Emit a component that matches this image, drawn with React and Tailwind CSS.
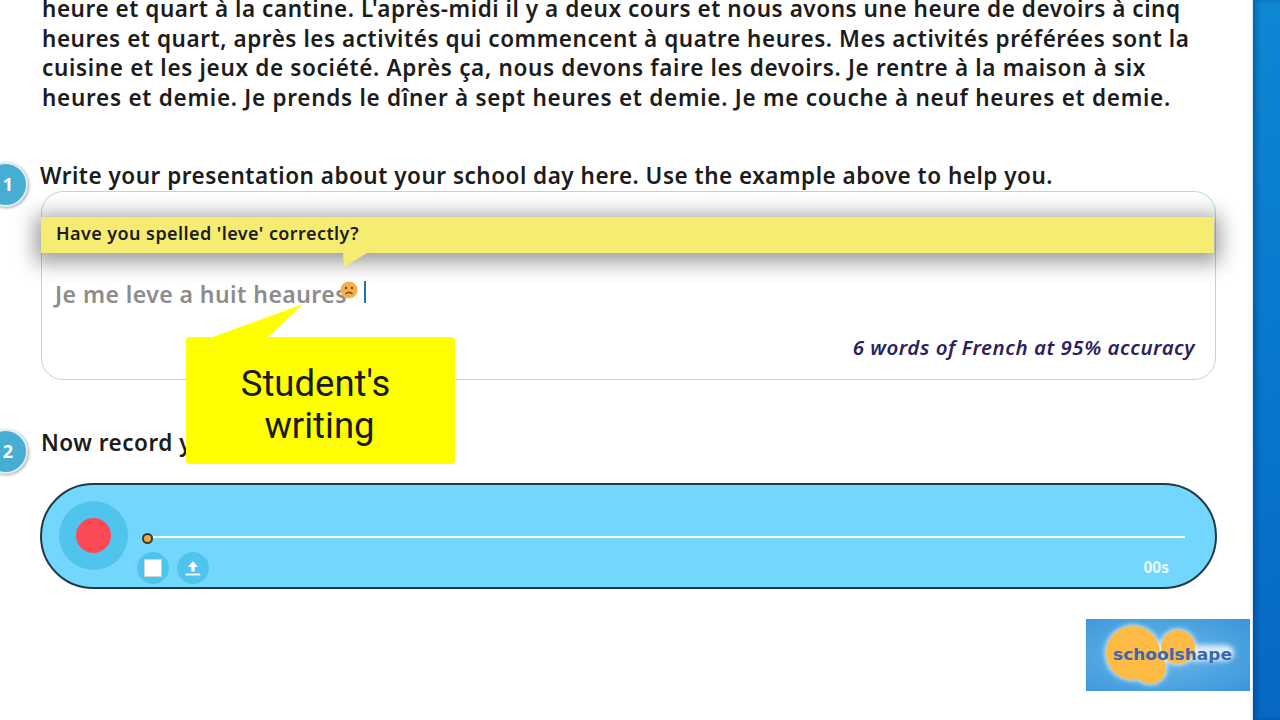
import React from "react";

const Step = ({ n }) => (
  <div className="w-[45px] h-[45px] shrink-0 -ml-[17px] rounded-full bg-[#48add3] border-2 border-[#dfeef4] shadow-[1px_1px_3px_rgba(0,0,0,0.35)] flex items-center justify-center text-white text-[18px] font-bold pl-[5px]">
    {n}
  </div>
);

const Logo = () => (
  <svg width="164" height="72" viewBox="0 0 164 72" className="block">
    <defs>
      <radialGradient id="logoBg" cx="0.45" cy="0.5" r="0.7">
        <stop offset="0" stopColor="#6bb8ea" />
        <stop offset="1" stopColor="#3c97d9" />
      </radialGradient>
      <filter id="logoGlow" x="-20%" y="-20%" width="140%" height="140%">
        <feGaussianBlur stdDeviation="2.5" />
      </filter>
    </defs>
    <rect width="164" height="72" fill="url(#logoBg)" />
    <g fill="#ffffff" opacity="0.8" filter="url(#logoGlow)">
      <circle cx="47" cy="34" r="28" />
      <circle cx="64" cy="49" r="17" />
      <circle cx="92" cy="28" r="18" />
      <rect x="60" y="26" width="88" height="16" rx="8" />
    </g>
    <g fill="#fdbb45">
      <circle cx="47" cy="34" r="27" />
      <circle cx="64" cy="49" r="16" />
      <circle cx="92" cy="28" r="17" />
    </g>
    <text x="27" y="41" fontFamily="'DejaVu Sans', sans-serif" fontSize="16" fontWeight="700" fill="#3b68ac" textLength="119" lengthAdjust="spacingAndGlyphs">
      schoolshape
    </text>
  </svg>
);

export default function App() {
  return (
    <div className="relative flex h-[720px] w-[1280px] overflow-hidden bg-white font-['Noto_Sans',sans-serif] text-[#1c1c1c]">
      <main className="w-[1252px] flex flex-col items-stretch">
        <div className="-mt-[6px] pl-[42px] pr-[50px] text-[22.5px] leading-[29.5px] font-semibold tracking-[0.55px] whitespace-nowrap">
          <p>heure et quart à la cantine. L'après-midi il y a deux cours et nous avons une heure de devoirs à cinq</p>
          <p>heures et quart, après les activités qui commencent à quatre heures. Mes activités préférées sont la</p>
          <p className="tracking-[0.67px]">cuisine et les jeux de société. Après ça, nous devons faire les devoirs. Je rentre à la maison à six</p>
          <p className="tracking-[0.73px]">heures et demie. Je prends le dîner à sept heures et demie. Je me couche à neuf heures et demie.</p>
        </div>

        <div className="flex items-start mt-[50px] h-[45px]">
          <Step n="1" />
          <h2 className="ml-[12px] -mt-[1px] text-[22.5px] leading-[30px] font-semibold tracking-[0.5px] whitespace-nowrap">
            Write your presentation about your school day here. Use the example above to help you.
          </h2>
        </div>

        {/* text box with the spelling hint */}
        <div className="relative ml-[41px] w-[1175px] h-[189px] -mt-[16px] rounded-[22px] border border-[#b5d8e8] flex flex-col">
          <div className="relative mt-[25px] -ml-px w-[1173px] h-[36px] bg-[#f6ec72] shadow-[0_4px_20px_6px_rgba(0,0,0,0.38)] flex items-center pl-[15px] pb-[4px] text-[18px] font-semibold text-[#1c1c1c] tracking-[0.42px]">
            Have you spelled 'leve' correctly?
            <svg width="26" height="15" viewBox="0 0 26 15" className="absolute left-[302px] top-[35px]">
              <polygon points="0,0 26,0 1,15" fill="#f6ec72" />
            </svg>
          </div>
          <div className="flex items-center mt-[26px] ml-[13px] h-[30px] relative">
            <span className="text-[23px] text-[#8c8c8c] font-semibold tracking-[0.45px] whitespace-nowrap">Je me leve a huit heaures</span>
            <svg width="18" height="18" viewBox="0 0 18 18" className="absolute left-[285px] top-[2px]">
              <circle cx="9" cy="9" r="8.5" fill="#f4b04a" />
              <circle cx="6" cy="7" r="1.2" fill="#7a4a12" />
              <circle cx="12" cy="7" r="1.2" fill="#7a4a12" />
              <path d="M5.5 13 Q9 9.5 12.5 13" fill="none" stroke="#7a4a12" strokeWidth="1.2" />
            </svg>
            <div className="absolute left-[309px] top-[2px] w-[2px] h-[22px] bg-[#1f6fb5]" />
          </div>
          <div className="mt-[23px] pr-[20px] text-right text-[20.5px] italic font-semibold text-[#2d1f5e] tracking-[0.5px]">
            6 words of French at 95% accuracy
          </div>
        </div>

        <div className="flex items-start mt-[49px] h-[45px]">
          <Step n="2" />
          <h2 className="ml-[13px] -mt-[1px] text-[22.5px] leading-[30px] font-semibold tracking-[0.5px] whitespace-nowrap">
            Now record y
          </h2>
        </div>

        {/* recorder */}
        <div className="relative ml-[40px] mt-[9px] w-[1177px] h-[106px] rounded-[53px] bg-[#73d7fd] border-2 border-[#1d3a45] flex">
          <div className="ml-[17px] mt-[16px] w-[69px] h-[69px] rounded-full bg-[#4fc4ec] flex items-center justify-center shrink-0">
            <div className="w-[35px] h-[35px] rounded-full bg-[#fb4a56]" />
          </div>
          <div className="flex-1 pl-[15px] pr-[30px] flex flex-col">
            <div className="flex items-center mt-[46px] h-[12px] -ml-[1px]">
              <div className="w-[11px] h-[11px] rounded-full bg-[#eea93f] border-2 border-[#3a3a2a] shrink-0 translate-y-[1px]" />
              <div className="flex-1 h-[1.5px] bg-[#f4fbff]" />
            </div>
            <div className="flex items-center gap-[8px] mt-[9px] -ml-[6px]">
              <div className="w-[32px] h-[32px] rounded-full bg-[#4fc4ec] flex items-center justify-center">
                <div className="w-[18px] h-[18px] bg-white border border-[#d0d0d0]" />
              </div>
              <div className="w-[32px] h-[32px] rounded-full bg-[#4fc4ec] flex items-center justify-center">
                <svg width="18" height="18" viewBox="0 0 16 16">
                  <path d="M8 2 L12.5 7 H9.5 V11 H6.5 V7 H3.5 Z" fill="#fff" />
                  <rect x="1.5" y="13" width="13" height="1.6" fill="#fff" />
                </svg>
              </div>
              <span className="ml-auto mr-[16px] text-[15.5px] font-bold text-[#e8f8ff]">00s</span>
            </div>
          </div>
        </div>

        <div className="self-end mt-[30px] mr-[2px]">
          <Logo />
        </div>
      </main>

      <aside className="w-[28px] h-full bg-gradient-to-b from-[#0e87d4] to-[#0668c4] border-l border-[#cfe6f4] shadow-[inset_4px_0_4px_rgba(0,40,90,0.35)]" />

      {/* Student's writing callout */}
      <div className="absolute left-[186px] top-[337px] w-[269px] h-[127px] rounded-[4px] bg-[#ffff00] flex items-center justify-center text-center font-['Roboto',sans-serif] text-[36.5px] leading-[42px] text-[#1a1a1a] pt-[8px] pr-[10px]">
        <span>
          Student's
          <br />
          <span className="pl-[8px]">writing</span>
        </span>
        <svg width="100" height="34" viewBox="0 0 100 34" className="absolute left-[20px] -top-[33px]">
          <polygon points="4,34 97,0 61,34" fill="#ffff00" />
        </svg>
      </div>
    </div>
  );
}
